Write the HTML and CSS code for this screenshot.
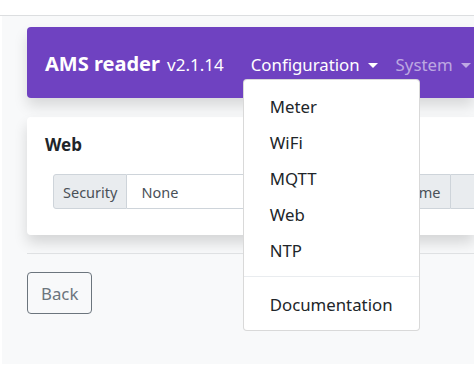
FILE: index.html
```html
<!DOCTYPE html>
<html lang="en">
<head>
<meta charset="utf-8">
<title>AMS reader</title>
<link rel="stylesheet" href="styles.css">
</head>
<body>
<div class="topbar"></div>
<div class="page">
  <nav class="navbar">
    <span class="brand">AMS reader <small>v2.1.14</small></span>
    <ul class="nav">
      <li class="nav-item">
        <a class="nav-link active" href="#">Configuration<span class="caret"></span></a>
        <div class="dropdown-menu">
          <a class="dropdown-item" href="#">Meter</a>
          <a class="dropdown-item" href="#">WiFi</a>
          <a class="dropdown-item" href="#">MQTT</a>
          <a class="dropdown-item" href="#">Web</a>
          <a class="dropdown-item" href="#">NTP</a>
          <div class="dropdown-divider"></div>
          <a class="dropdown-item" href="#">Documentation</a>
        </div>
      </li>
      <li class="nav-item">
        <a class="nav-link muted" href="#">System<span class="caret"></span></a>
      </li>
    </ul>
  </nav>

  <div class="card">
    <h5 class="card-title">Web</h5>
    <div class="row">
      <div class="input-group security">
        <span class="input-label">Security</span>
        <span class="select">None</span>
      </div>
      <div class="input-group user">
        <span class="input-label">Username</span>
        <span class="input disabled"></span>
      </div>
    </div>
  </div>

  <hr class="rule">

  <button class="btn" type="button">Back</button>
</div>
</body>
</html>
```

FILE: styles.css
```css
* { box-sizing: border-box; }

html, body {
  margin: 0;
  padding: 0;
  background: #ffffff;
  overflow: hidden;
}

body {
  width: 474px;
  height: 367px;
  font-family: "Noto Sans", "Open Sans", sans-serif;
  font-size: 16.8px;
  color: #212529;
}

.topbar {
  height: 16px;
  border-bottom: 1px solid #dcdee0;
}

.page {
  margin-left: 2px;
  height: 348px;
  background: #f8f9fa;
  padding: 11px 0 0 25px;
  overflow: hidden;
}

.navbar {
  height: 71px;
  background: #6f42c1;
  border-radius: 4px 0 0 4px;
  box-shadow: 0 8px 14px rgba(0, 0, 0, 0.13);
  display: flex;
  align-items: center;
  padding: 4px 0 0 18px;
  white-space: nowrap;
  position: relative;
  z-index: 2;
}

.brand {
  color: #ffffff;
  font-size: 20px;
  font-weight: 700;
  margin-right: 18px;
  line-height: 30px;
}

.brand small {
  font-size: 17px;
  font-weight: 400;
  margin-left: 2px;
}

.nav {
  list-style: none;
  margin: 0;
  padding: 0;
  display: flex;
}

.nav-item {
  position: relative;
}

.nav-link {
  display: block;
  padding: 9px 9px;
  line-height: 27px;
  color: #ffffff;
  text-decoration: none;
}

.nav-link.muted {
  color: rgba(255, 255, 255, 0.55);
}

.caret {
  display: inline-block;
  margin-left: 8px;
  vertical-align: 3px;
  border-top: 5px solid currentColor;
  border-left: 5.5px solid transparent;
  border-right: 5.5px solid transparent;
}

.dropdown-menu {
  position: absolute;
  top: 37px;
  left: 1px;
  width: 177px;
  background: #ffffff;
  border: 1px solid rgba(0, 0, 0, 0.15);
  border-radius: 4px;
  padding: 8px 0;
  display: flex;
  flex-direction: column;
}

.dropdown-item {
  display: block;
  padding: 4.5px 26px;
  line-height: 27px;
  color: #212529;
  text-decoration: none;
}

.dropdown-divider {
  border-top: 1px solid #e9ecef;
  margin: 8px 0 9px;
}

.card {
  margin-top: 19px;
  height: 118px;
  background: #ffffff;
  border-radius: 4px 0 0 4px;
  box-shadow: 0 8px 14px rgba(0, 0, 0, 0.14);
  padding: 15px 0 0 18px;
  white-space: nowrap;
  overflow: hidden;
}

.card-title {
  margin: 0;
  font-size: 17px;
  font-weight: 700;
  line-height: 26px;
}

.row {
  display: flex;
  gap: 17px;
  margin: 16px 0 0 8px;
}

.input-group {
  display: flex;
  flex-shrink: 0;
  height: 35px;
  font-size: 14.5px;
}

.input-group.security { width: 290px; }
.input-group.user { width: 200px; }

.input-label {
  display: flex;
  align-items: center;
  padding: 0 9px;
  background: #e9ecef;
  border: 1px solid #ced4da;
  border-radius: 3px 0 0 3px;
  color: #495057;
}

.select,
.input {
  flex: 1;
  display: flex;
  align-items: center;
  padding: 0 14px;
  background: #ffffff;
  border: 1px solid #ced4da;
  border-left: 0;
  border-radius: 0 3px 3px 0;
  color: #495057;
}

.input.disabled {
  background: #e9ecef;
}

.rule {
  margin: 18px 0 18px;
  border: 0;
  border-top: 1px solid #dfe1e3;
}

.btn {
  display: block;
  height: 42px;
  padding: 0 13px;
  font-family: inherit;
  font-size: 16.8px;
  color: #6c757d;
  background: transparent;
  border: 1px solid #6c757d;
  border-radius: 4px;
}
```
